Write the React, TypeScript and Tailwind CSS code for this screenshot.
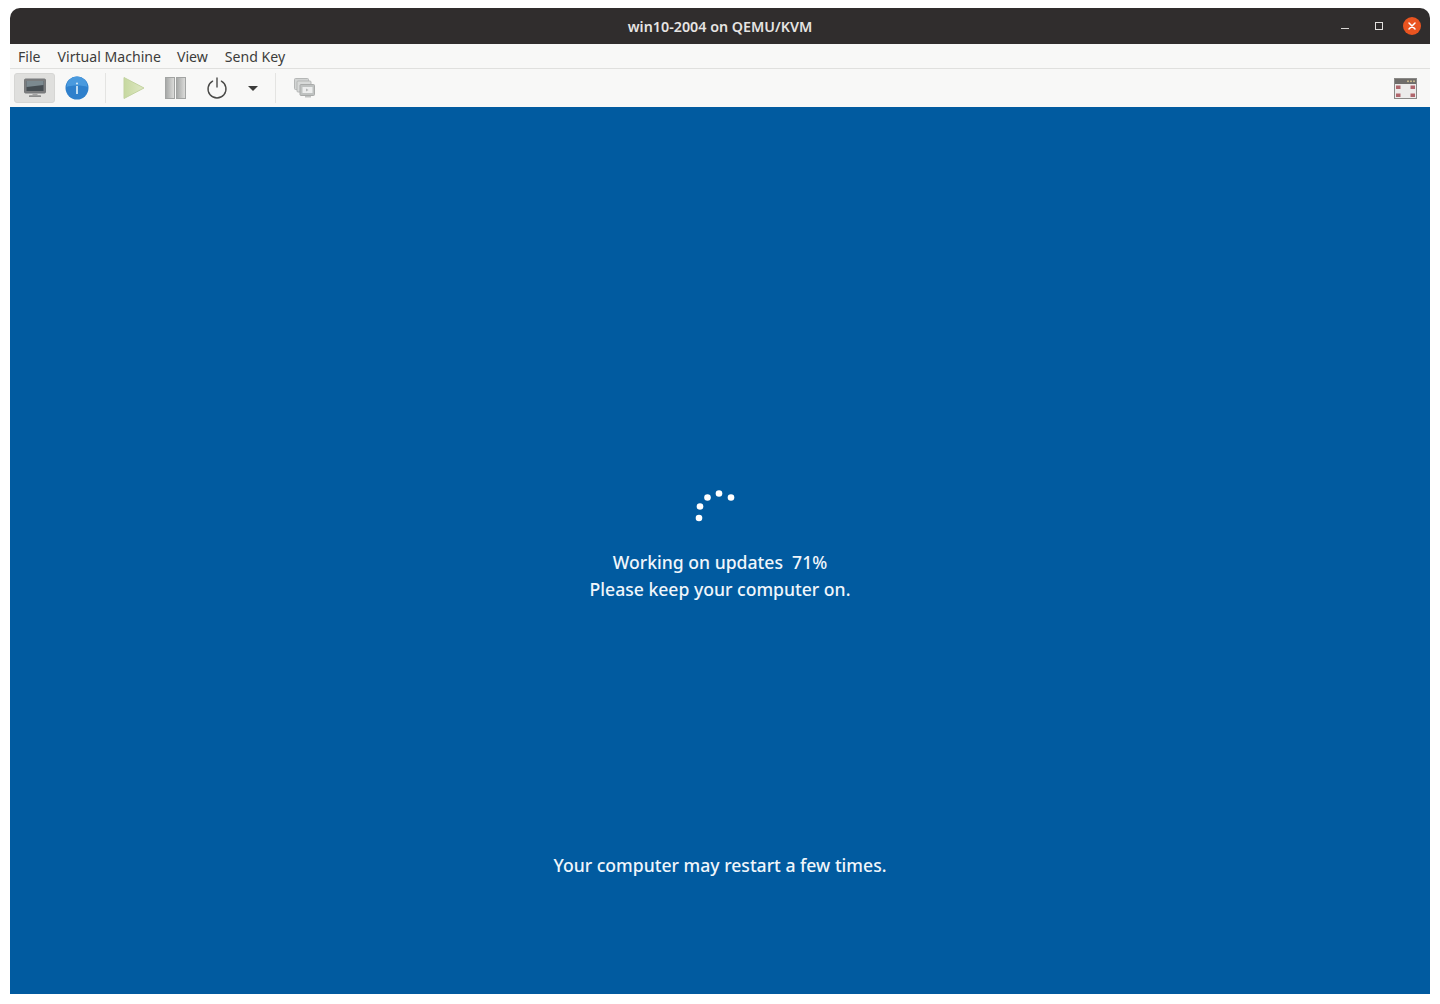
import React from 'react';

const uiFont = "font-['Noto_Sans','Open_Sans',sans-serif]";

// Toolbar icons
const MonitorIcon = () => (
  <svg width="24" height="22" viewBox="0 0 24 22">
    <rect x="1.5" y="2" width="21" height="14" rx="1" fill="#7b7d7e" stroke="#77797a" />
    <rect x="3.5" y="4" width="17" height="10" fill="#454d52" />
    <path d="M3.5 4h17v4L3.5 10z" fill="#7c8a90" />
    <rect x="9.5" y="16.5" width="5" height="1.8" fill="#a3a4a4" />
    <rect x="6" y="18.3" width="12" height="1.6" rx="0.5" fill="#8b8c8c" />
  </svg>
);

const InfoIcon = () => (
  <svg width="24" height="24" viewBox="0 0 24 24">
    <circle cx="12" cy="12" r="11.5" fill="#2f80cc" />
    <path d="M1.5 11a10.5 10.5 0 0 1 21 0c-4-2-17-2-21 0z" fill="#4a9ade" />
    <circle cx="12" cy="7.5" r="1.1" fill="#cfe5f6" />
    <rect x="11.1" y="10" width="1.8" height="8" fill="#cfe5f6" />
  </svg>
);

const PlayIcon = () => (
  <svg width="22" height="24" viewBox="0 0 22 24">
    <defs>
      <linearGradient id="playFill" x1="0" x2="1" y1="0" y2="0">
        <stop offset="0" stopColor="#c6d8a0" />
        <stop offset="1" stopColor="#dfe8c4" />
      </linearGradient>
    </defs>
    <path d="M1 1.5 21 12 1 22.5z" fill="url(#playFill)" stroke="#c3d3a0" strokeWidth="1" />
  </svg>
);

const PauseIcon = () => (
  <svg width="21" height="22" viewBox="0 0 21 22">
    <defs>
      <linearGradient id="pauseFill" x1="0" x2="1" y1="0" y2="0">
        <stop offset="0" stopColor="#a4a6a5" />
        <stop offset="1" stopColor="#dededc" />
      </linearGradient>
    </defs>
    <rect x="0.5" y="0.5" width="9" height="21" fill="url(#pauseFill)" stroke="#a2a4a3" />
    <rect x="11.5" y="0.5" width="9" height="21" fill="url(#pauseFill)" stroke="#a2a4a3" />
  </svg>
);

const PowerIcon = () => (
  <svg width="22" height="22" viewBox="0 0 22 22" fill="none" stroke="#4a4a48" strokeWidth="1.4" strokeLinecap="round">
    <path d="M6.6 4.2a9 9 0 1 0 8.8 0" />
    <path d="M11 1v9" />
  </svg>
);

const CaretIcon = () => (
  <svg width="10" height="5" viewBox="0 0 10 5">
    <path d="M0 0h10L5 5z" fill="#3c3c3a" />
  </svg>
);

const SnapshotIcon = () => (
  <svg width="21" height="20" viewBox="0 0 21 20">
    <rect x="0.5" y="0.5" width="14" height="11" rx="1" fill="#d2d4d3" stroke="#b5b7b6" />
    <rect x="3" y="3" width="14" height="11" rx="1" fill="#d8dad9" stroke="#b5b7b6" />
    <rect x="6" y="6.5" width="14.5" height="11" rx="1" fill="#bfc2c1" stroke="#a9abaa" />
    <rect x="8.5" y="9" width="10" height="6" fill="#eceded" />
    <path d="M12 10.5v3l2.6-1.5z" fill="#b5b7b6" />
    <rect x="11" y="18" width="6" height="1.5" fill="#c0c2c1" />
  </svg>
);

const FullscreenIcon = () => (
  <svg width="23" height="21" viewBox="0 0 23 21">
    <rect x="0.5" y="0.5" width="22" height="20" fill="#ecebea" stroke="#8a8987" />
    <rect x="1" y="1" width="21" height="5" fill="#6f6d6a" />
    <rect x="13" y="2.5" width="2" height="1.6" fill="#c6b88e" />
    <rect x="16" y="2.5" width="2" height="1.6" fill="#c6b88e" />
    <rect x="19" y="2.5" width="2" height="1.6" fill="#c6b88e" />
    <rect x="2" y="7.5" width="4.5" height="3.5" fill="#b0666c" />
    <rect x="16.5" y="7.5" width="4.5" height="3.5" fill="#b0666c" />
    <rect x="2" y="15.5" width="4.5" height="3.5" fill="#b0666c" />
    <rect x="16.5" y="15.5" width="4.5" height="3.5" fill="#b0666c" />
  </svg>
);

const Spinner = () => (
  <svg width="44" height="36" viewBox="0 0 44 36" fill="#fff">
    <circle cx="5" cy="31" r="3.3" />
    <circle cx="6" cy="19.5" r="3.3" />
    <circle cx="13.5" cy="10.5" r="3.3" />
    <circle cx="25" cy="6.5" r="3.3" />
    <circle cx="37" cy="10.5" r="3.3" />
  </svg>
);

const Divider = () => <div className="mx-[9px] h-[30px] w-px bg-[#e4e4e2]" />;

export default function App() {
  return (
    <div className={`h-[1004px] w-[1440px] overflow-hidden bg-white px-[10px] pt-2 pb-[10px] ${uiFont}`}>
      <div className="flex h-full flex-col overflow-hidden rounded-t-[10px]">
        {/* Title bar */}
        <div className="relative flex h-9 shrink-0 items-center justify-center bg-[#302d2d] pt-[2px]">
          <span className="text-[14.3px] font-semibold text-[#e6e4e2]">win10-2004 on QEMU/KVM</span>
          <div className="absolute right-[9px] top-[9px] flex items-center">
            <div className="mr-[26px] mt-[5px] h-px w-2 bg-[#d8d6d4]" />
            <div className="mr-[20px] h-2 w-2 border border-[#e2e0de]" />
            <div className="flex h-[18px] w-[18px] items-center justify-center rounded-full bg-[#e95420]">
              <svg width="8" height="8" viewBox="0 0 8 8" stroke="#fff" strokeWidth="1.5" strokeLinecap="round">
                <path d="M1 1l6 6M7 1 1 7" />
              </svg>
            </div>
          </div>
        </div>

        {/* Menu bar */}
        <div className="flex h-[25px] shrink-0 items-center gap-4 border-b border-[#e0e0de] bg-[#f8f8f7] pl-2 pt-[2px] text-[14.1px] text-[#3d3d3b]">
          <span className="mr-px">File</span>
          <span>Virtual Machine</span>
          <span className="mr-px">View</span>
          <span>Send Key</span>
        </div>

        {/* Toolbar */}
        <div className="flex h-[38px] shrink-0 items-center bg-[#f8f8f7] pl-1 pr-[13px]">
          <div className="flex h-[30px] w-[41px] items-center justify-center rounded-[3px] border border-[#d6d6d4] bg-[#dfdfdd]">
            <MonitorIcon />
          </div>
          <div className="ml-[10px] flex w-6 items-center justify-center">
            <InfoIcon />
          </div>
          <div className="ml-[7px]"><Divider /></div>
          <div className="ml-[8px]"><PlayIcon /></div>
          <div className="ml-[20px]"><PauseIcon /></div>
          <div className="ml-[20px]"><PowerIcon /></div>
          <div className="ml-[20px]"><CaretIcon /></div>
          <div className="ml-[8px]"><Divider /></div>
          <div className="ml-[9px]"><SnapshotIcon /></div>
          <div className="ml-auto"><FullscreenIcon /></div>
        </div>

        {/* Guest display */}
        <div className="flex min-h-0 flex-1 flex-col items-center bg-[#015ba0] text-white">
          <div className="ml-[-8px] mt-[380px]">
            <Spinner />
          </div>
          <div className="mt-[26px] text-center text-[17.6px] font-medium leading-[27px] text-[#f0f6fb]">
            <p className="whitespace-pre">Working on updates  71%</p>
            <p>Please keep your computer on.</p>
          </div>
          <p className="mt-[249px] text-[17.6px] font-medium leading-[27px] text-[#f0f6fb]">
            Your computer may restart a few times.
          </p>
        </div>
      </div>
    </div>
  );
}
